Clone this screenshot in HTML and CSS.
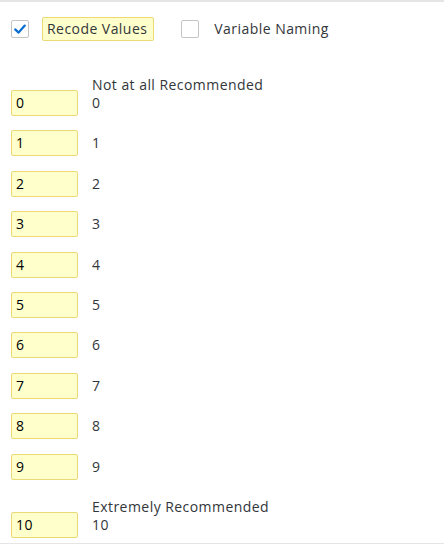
FILE: index.html
```html
<!DOCTYPE html>
<html lang="en">
<head>
<meta charset="utf-8">
<title>Recode Values</title>
<link rel="stylesheet" href="styles.css">
</head>
<body>
<div class="panel">
  <div class="toolbar">
    <span class="checkbox checked">
      <svg viewBox="0 0 18 18" width="18" height="18"><path d="M4.2 9.4 L7.6 12.6 L13.8 5.6" fill="none" stroke="#0a6ed1" stroke-width="2.2" stroke-linecap="round" stroke-linejoin="round"/></svg>
    </span>
    <span class="option active">Recode Values</span>
    <span class="checkbox"></span>
    <span class="option">Variable Naming</span>
  </div>
  <div class="rows">
    <div class="row"><div class="field">0</div><div class="label">Not at all Recommended<br>0</div></div>
    <div class="row"><div class="field">1</div><div class="label">1</div></div>
    <div class="row"><div class="field">2</div><div class="label">2</div></div>
    <div class="row"><div class="field">3</div><div class="label">3</div></div>
    <div class="row"><div class="field">4</div><div class="label">4</div></div>
    <div class="row"><div class="field">5</div><div class="label">5</div></div>
    <div class="row"><div class="field">6</div><div class="label">6</div></div>
    <div class="row"><div class="field">7</div><div class="label">7</div></div>
    <div class="row"><div class="field">8</div><div class="label">8</div></div>
    <div class="row"><div class="field">9</div><div class="label">9</div></div>
    <div class="row captioned"><div class="field">10</div><div class="label">Extremely Recommended<br>10</div></div>
  </div>
</div>
</body>
</html>
```
FILE: styles.css
```css
html, body {
  margin: 0;
  padding: 0;
  background: #ffffff;
}
body {
  font-family: "Open Sans", "Noto Sans", sans-serif;
  font-size: 14px;
  letter-spacing: 0.45px;
  color: #32363a;
}
.panel {
  box-sizing: border-box;
  width: 444px;
  height: 544px;
  border-top: 2px solid #e5e5e5;
  border-bottom: 1px solid #e5e5e5;
  padding-left: 11px;
}
.toolbar {
  display: flex;
  align-items: center;
  height: 24px;
  margin-top: 15px;
}
.checkbox {
  box-sizing: border-box;
  width: 18px;
  height: 18px;
  border: 1px solid #c4c4c4;
  border-radius: 2px;
  background: #fff;
  display: flex;
  margin-right: 13px;
}
.checkbox svg {
  margin: -1px;
}
.option {
  box-sizing: border-box;
  height: 24px;
  line-height: 22px;
  padding: 0 0 0 1px;
  border: 1px solid transparent;
  border-radius: 2px;
}
.option.active {
  padding: 0 6px 0 4px;
  margin-right: 27px;
  background: #ffffcc;
  border-color: #ebd977;
}
.rows {
  display: flex;
  flex-direction: column;
  gap: 14.4px;
  margin-top: 35px;
}
.row {
  display: flex;
  align-items: flex-end;
}
.row.captioned {
  margin-top: 3.6px;
}
.field {
  box-sizing: border-box;
  width: 67px;
  height: 26px;
  line-height: 24px;
  padding-left: 4px;
  background: #ffffcc;
  border: 1px solid #ebd977;
  border-radius: 2px;
  color: #000;
  flex: none;
}
.label {
  margin-left: 14px;
  line-height: 18px;
  padding-bottom: 4px;
}
```
